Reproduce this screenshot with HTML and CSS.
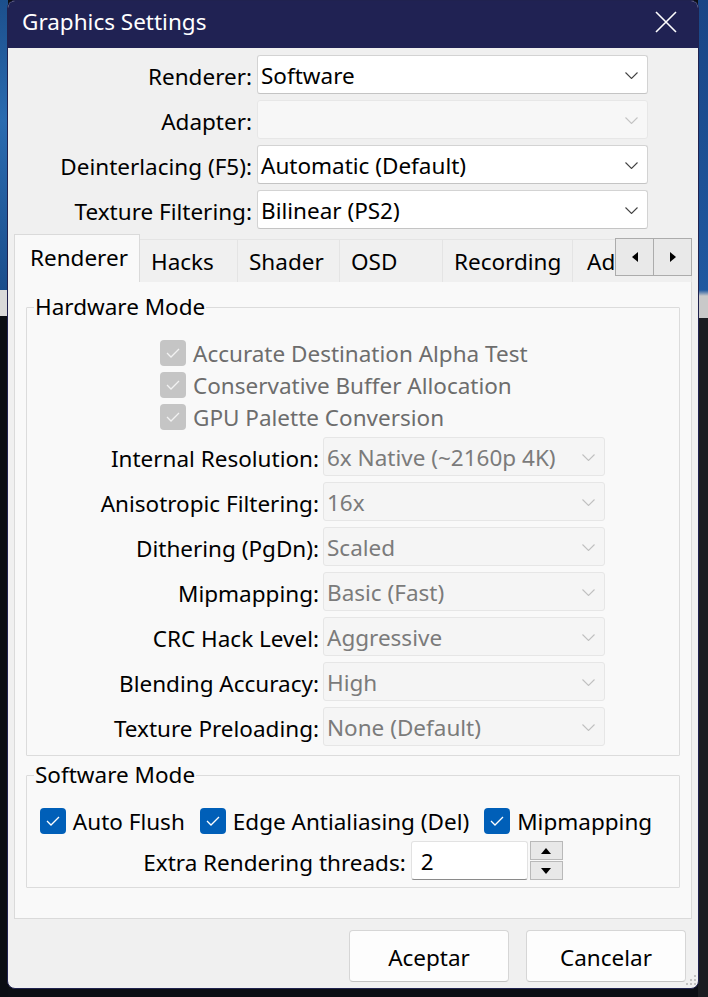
FILE: index.html
```html
<!DOCTYPE html>
<html lang="en">

<head>
    <meta charset="UTF-8">
    <meta name="viewport" content="width=device-width, initial-scale=1.0">
    <title>Graphics Settings</title>
    <link rel="stylesheet" href="styles.css">
</head>

<body>
    <div class="window">
        <div class="titlebar">
            <span class="title">Graphics Settings</span>
            <svg class="close" width="22" height="22" viewBox="0 0 22 22">
                <path d="M1 1 L21 21 M21 1 L1 21" stroke="#fff" stroke-width="1.6" fill="none" />
            </svg>
        </div>

        <div class="content">
            <!-- top form -->
            <div class="form top-form">
                <label>Renderer:</label>
                <div class="combo">Software<svg class="chev" width="13" height="7" viewBox="0 0 13 7"><polyline points="0.5,0.5 6.5,6.5 12.5,0.5" /></svg></div>
                <label>Adapter:</label>
                <div class="combo disabled"><svg class="chev" width="13" height="7" viewBox="0 0 13 7"><polyline points="0.5,0.5 6.5,6.5 12.5,0.5" /></svg></div>
                <label>Deinterlacing (F5):</label>
                <div class="combo">Automatic (Default)<svg class="chev" width="13" height="7" viewBox="0 0 13 7"><polyline points="0.5,0.5 6.5,6.5 12.5,0.5" /></svg></div>
                <label>Texture Filtering:</label>
                <div class="combo">Bilinear (PS2)<svg class="chev" width="13" height="7" viewBox="0 0 13 7"><polyline points="0.5,0.5 6.5,6.5 12.5,0.5" /></svg></div>
            </div>

            <!-- tabs -->
            <div class="tabs">
                <div class="tabbar">
                    <div class="tab active">Renderer</div>
                    <div class="tab w-hacks">Hacks</div>
                    <div class="tab w-shader">Shader</div>
                    <div class="tab w-osd">OSD</div>
                    <div class="tab w-rec">Recording</div>
                    <div class="tab w-adv">Advanced</div>
                    <div class="scroller">
                        <div class="scroll-btn"><svg width="6" height="10" viewBox="0 0 6 10"><polygon points="6,0 6,10 0,5" /></svg></div>
                        <div class="scroll-btn"><svg width="6" height="10" viewBox="0 0 6 10"><polygon points="0,0 0,10 6,5" /></svg></div>
                    </div>
                </div>

                <div class="tabpanel">
                    <fieldset class="group hw">
                        <legend>Hardware Mode</legend>
                        <div class="checks">
                            <div class="check disabled"><span class="box"><svg width="14" height="10" viewBox="0 0 14 10"><polyline points="1,5 5,9 13,1" /></svg></span>Accurate Destination Alpha Test</div>
                            <div class="check disabled"><span class="box"><svg width="14" height="10" viewBox="0 0 14 10"><polyline points="1,5 5,9 13,1" /></svg></span>Conservative Buffer Allocation</div>
                            <div class="check disabled"><span class="box"><svg width="14" height="10" viewBox="0 0 14 10"><polyline points="1,5 5,9 13,1" /></svg></span>GPU Palette Conversion</div>
                        </div>
                        <div class="form hw-form">
                            <label>Internal Resolution:</label>
                            <div class="combo off">6x Native (~2160p 4K)<svg class="chev" width="13" height="7" viewBox="0 0 13 7"><polyline points="0.5,0.5 6.5,6.5 12.5,0.5" /></svg></div>
                            <label>Anisotropic Filtering:</label>
                            <div class="combo off">16x<svg class="chev" width="13" height="7" viewBox="0 0 13 7"><polyline points="0.5,0.5 6.5,6.5 12.5,0.5" /></svg></div>
                            <label>Dithering (PgDn):</label>
                            <div class="combo off">Scaled<svg class="chev" width="13" height="7" viewBox="0 0 13 7"><polyline points="0.5,0.5 6.5,6.5 12.5,0.5" /></svg></div>
                            <label>Mipmapping:</label>
                            <div class="combo off">Basic (Fast)<svg class="chev" width="13" height="7" viewBox="0 0 13 7"><polyline points="0.5,0.5 6.5,6.5 12.5,0.5" /></svg></div>
                            <label>CRC Hack Level:</label>
                            <div class="combo off">Aggressive<svg class="chev" width="13" height="7" viewBox="0 0 13 7"><polyline points="0.5,0.5 6.5,6.5 12.5,0.5" /></svg></div>
                            <label>Blending Accuracy:</label>
                            <div class="combo off">High<svg class="chev" width="13" height="7" viewBox="0 0 13 7"><polyline points="0.5,0.5 6.5,6.5 12.5,0.5" /></svg></div>
                            <label>Texture Preloading:</label>
                            <div class="combo off">None (Default)<svg class="chev" width="13" height="7" viewBox="0 0 13 7"><polyline points="0.5,0.5 6.5,6.5 12.5,0.5" /></svg></div>
                        </div>
                    </fieldset>

                    <fieldset class="group sw">
                        <legend>Software Mode</legend>
                        <div class="check-row">
                            <div class="check"><span class="box"><svg width="14" height="10" viewBox="0 0 14 10"><polyline points="1,5 5,9 13,1" /></svg></span>Auto Flush</div>
                            <div class="check"><span class="box"><svg width="14" height="10" viewBox="0 0 14 10"><polyline points="1,5 5,9 13,1" /></svg></span>Edge Antialiasing (Del)</div>
                            <div class="check"><span class="box"><svg width="14" height="10" viewBox="0 0 14 10"><polyline points="1,5 5,9 13,1" /></svg></span>Mipmapping</div>
                        </div>
                        <div class="spin-row">
                            <label>Extra Rendering threads:</label>
                            <div class="spinbox">2</div>
                            <div class="spin-btns">
                                <div class="spin-btn"><svg width="10" height="6" viewBox="0 0 10 6"><polygon points="0,6 10,6 5,0" /></svg></div>
                                <div class="spin-btn"><svg width="10" height="6" viewBox="0 0 10 6"><polygon points="0,0 10,0 5,6" /></svg></div>
                            </div>
                        </div>
                    </fieldset>
                </div>
            </div>

            <!-- dialog buttons -->
            <div class="buttons">
                <button class="btn">Aceptar</button>
                <button class="btn">Cancelar</button>
            </div>

            <svg class="grip" width="12" height="12" viewBox="0 0 12 12">
                <rect x="9" y="1" width="2" height="2" />
                <rect x="5" y="5" width="2" height="2" />
                <rect x="9" y="5" width="2" height="2" />
                <rect x="1" y="9" width="2" height="2" />
                <rect x="5" y="9" width="2" height="2" />
                <rect x="9" y="9" width="2" height="2" />
            </svg>
        </div>
    </div>
</body>

</html>
```

FILE: styles.css
```css
body {
    margin: 0;
    height: 997px;
    overflow: hidden;
    font-family: "Noto Sans", "Open Sans", sans-serif;
    font-size: 22.5px;
    color: #000;
    background:
        linear-gradient(#1c4f8c 0, #2a6bb0 120px, #1b4e8c 290px, #d9d9d9 290px, #d9d9d9 316px, #0a0d13 316px) left top / 8px 100% no-repeat,
        linear-gradient(#1a4585 0, #1f58a0 290px, #c9c9c9 296px, #c9c9c9 318px, #1b1d22 318px) right top / 10px 100% no-repeat,
        #0b0e14;
}

.window {
    position: relative;
    display: flex;
    flex-direction: column;
    box-sizing: border-box;
    width: 692px;
    height: 989px;
    margin-left: 7px;
    border: 1px solid #20224f;
    border-radius: 8px;
    background: #f0f0f0;
    overflow: hidden;
}


/* title bar */

.titlebar {
    display: flex;
    align-items: center;
    justify-content: space-between;
    box-sizing: border-box;
    height: 47px;
    padding: 0 21px 6px 14px;
    background: #202253;
    color: #fff;
    font-size: 22.5px;
}

.titlebar .close {
    display: block;
}

.content {
    position: relative;
    display: flex;
    flex-direction: column;
    flex: 1;
}


/* label + combo forms */

.form {
    display: grid;
    align-items: center;
}

.form label,
.spin-row label {
    padding-top: 4px;
    text-align: right;
    white-space: nowrap;
}

.top-form {
    grid-template-columns: 244px 391px;
    column-gap: 5px;
    row-gap: 6px;
    margin-top: 7px;
}

.hw-form {
    grid-template-columns: 292px 282px;
    column-gap: 4px;
    row-gap: 6px;
    margin-top: 4px;
}

.combo {
    position: relative;
    box-sizing: border-box;
    height: 39px;
    padding: 2px 0 0 3px;
    line-height: 35px;
    background: #fff;
    border: 1px solid #d3d3d3;
    border-bottom-color: #c4c4c4;
    border-radius: 3px;
    white-space: nowrap;
}

.combo .chev {
    position: absolute;
    right: 9px;
    top: 16px;
    fill: none;
    stroke: #444;
    stroke-width: 1.1;
}

.combo.disabled {
    background: #f7f7f7;
    border-color: #e7e7e7;
}

.combo.disabled .chev {
    stroke: #c4c4c4;
}

.combo.off {
    background: #f5f5f5;
    border-color: #e6e6e6;
    color: #7b7b7b;
}

.combo.off .chev {
    stroke: #c0c0c0;
}


/* tab widget */

.tabs {
    display: flex;
    flex-direction: column;
    flex: 1;
    margin: 5px 6px 0;
}

.tabbar {
    position: relative;
    display: flex;
    align-items: flex-end;
    height: 48px;
    overflow: hidden;
}

.tab {
    box-sizing: border-box;
    flex: none;
    height: 43px;
    padding-left: 11px;
    line-height: 44px;
    background: #f0f0f0;
    border: 1px solid #e4e4e4;
    border-bottom: none;
    margin-left: -1px;
    white-space: nowrap;
}

.tab.active {
    z-index: 1;
    width: 126px;
    height: 48px;
    margin-left: 0;
    padding-left: 15px;
    line-height: 45px;
    background: #f9f9f9;
    border-color: #dadada;
}

.w-hacks { width: 99px; }
.w-shader { width: 103px; }
.w-osd { width: 104px; }
.w-rec { width: 131px; }
.w-adv { width: 120px; padding-left: 14px; }

.scroller {
    position: absolute;
    right: 0;
    top: 4px;
    display: flex;
}

.scroll-btn {
    display: flex;
    align-items: center;
    justify-content: center;
    box-sizing: border-box;
    width: 39px;
    height: 38px;
    margin-left: -1px;
    background: #e9e9e9;
    border: 1px solid #acacac;
}

.scroll-btn svg {
    fill: #000;
}

.tabpanel {
    display: flex;
    flex-direction: column;
    flex: 1;
    margin-top: -1px;
    padding: 0 11px;
    background: #f9f9f9;
    border: 1px solid #dadada;
}


/* group boxes */

.group {
    margin: 0;
    padding: 0;
    border: 1px solid #dcdcdc;
    border-radius: 1px;
}

.group legend {
    margin-left: 7px;
    padding: 0 1px;
    line-height: 30px;
}

.hw {
    margin-top: 10px;
    padding-bottom: 9px;
}

.sw {
    margin-top: 4px;
    padding-bottom: 7px;
}

.checks {
    display: flex;
    flex-direction: column;
    margin-top: 15px;
    padding-left: 133px;
}


/* check boxes */

.check {
    display: flex;
    align-items: center;
    height: 32px;
    white-space: nowrap;
}

.check .box {
    display: flex;
    align-items: center;
    justify-content: center;
    width: 26px;
    height: 26px;
    margin-right: 7px;
    background: #005fb8;
    border-radius: 4px;
}

.check .box svg {
    fill: none;
    stroke: #fff;
    stroke-width: 1.3;
}

.check.disabled {
    color: #6d6d6d;
}

.check.disabled .box {
    background: #c5c5c5;
}

.check.disabled .box svg {
    stroke: #f2f2f2;
}

.check-row {
    display: flex;
    justify-content: center;
    gap: 15px;
    margin-top: 15px;
    padding-right: 14px;
}

.spin-row {
    display: flex;
    align-items: center;
    justify-content: center;
    margin-top: 4px;
}

.spinbox {
    box-sizing: border-box;
    width: 117px;
    height: 39px;
    margin-left: 5px;
    padding: 2px 0 0 9px;
    line-height: 35px;
    background: #fff;
    border: 1px solid #e2e2e2;
    border-bottom-color: #8a8a8a;
    border-radius: 3px;
}

.spin-btns {
    display: flex;
    flex-direction: column;
    gap: 1px;
    margin-left: 2px;
}

.spin-btn {
    display: flex;
    align-items: center;
    justify-content: center;
    box-sizing: border-box;
    width: 33px;
    height: 19px;
    background: #e8e8e8;
    border: 1px solid #b9b9b9;
}

.spin-btn svg {
    fill: #000;
}


/* dialog buttons */

.buttons {
    display: flex;
    justify-content: flex-end;
    gap: 17px;
    margin: 11px 12px 6px 0;
}

.btn {
    width: 160px;
    height: 52px;
    padding: 3px 0 0;
    font-family: inherit;
    font-size: 22.5px;
    color: #000;
    background: #fdfdfd;
    border: 1px solid #d6d6d6;
    border-bottom-color: #c2c2c2;
    border-radius: 4px;
}

.grip {
    position: absolute;
    right: 1px;
    bottom: 2px;
    fill: #c3c3c3;
}
```
